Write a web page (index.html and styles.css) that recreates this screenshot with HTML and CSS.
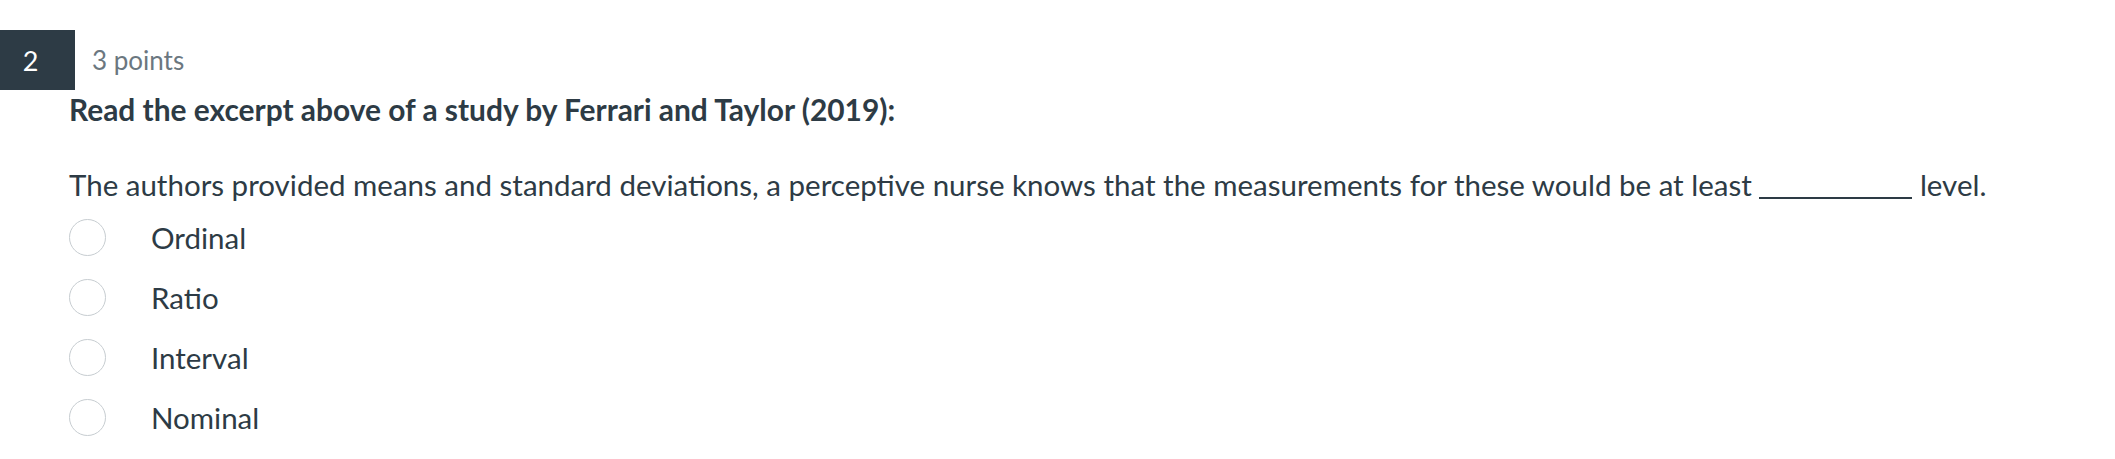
FILE: index.html
```html
<!DOCTYPE html>
<html lang="en">
<head>
<meta charset="utf-8">
<title>Question 2</title>
<link rel="stylesheet" href="styles.css">
</head>
<body>
<div class="question">
  <div class="question-header">
    <div class="question-number">2</div>
    <div class="question-points">3 points</div>
  </div>
  <div class="question-body">
    <p class="question-title">Read the excerpt above of a study by Ferrari and Taylor (2019):</p>
    <p class="question-text">The authors provided means and standard deviations, a perceptive nurse knows that the measurements for these would be at least <span class="blank"></span> level.</p>
    <ul class="answers">
      <li class="answer"><span class="radio"></span><span class="answer-label">Ordinal</span></li>
      <li class="answer"><span class="radio"></span><span class="answer-label">Ratio</span></li>
      <li class="answer"><span class="radio"></span><span class="answer-label">Interval</span></li>
      <li class="answer"><span class="radio"></span><span class="answer-label">Nominal</span></li>
    </ul>
  </div>
</div>
</body>
</html>
```
FILE: styles.css
```css
html, body {
  margin: 0;
  padding: 0;
  background: #ffffff;
}
body {
  font-family: Lato, "Liberation Sans", sans-serif;
  color: #2d3b45;
}
.question {
  padding-top: 30px;
}
.question-header {
  display: flex;
  align-items: center;
  height: 60px;
}
.question-number {
  width: 75px;
  height: 60px;
  background: #2d3b45;
  color: #ffffff;
  font-size: 27px;
  display: flex;
  align-items: center;
  justify-content: center;
  box-sizing: border-box;
  padding-right: 14px;
}
.question-points {
  margin-left: 17px;
  font-size: 26px;
  color: #6b7780;
}
.question-body {
  padding-left: 69px;
}
.question-title {
  margin: 2px 0 0;
  font-size: 29.9px;
  font-weight: 700;
  line-height: 34px;
}
.question-text {
  margin: 42px 0 0;
  font-size: 29.5px;
  line-height: 34px;
}
.blank {
  display: inline-block;
  width: 153px;
  height: 24px;
  border-bottom: 2px solid #2d3b45;
  vertical-align: baseline;
  margin-bottom: -3px;
}
.answers {
  list-style: none;
  margin: 5px 0 0;
  padding: 0;
}
.answer {
  display: flex;
  align-items: center;
  height: 60px;
}
.radio {
  width: 37px;
  height: 37px;
  box-sizing: border-box;
  border: 1px solid #c7cdd1;
  border-radius: 50%;
  flex: none;
}
.answer-label {
  margin-left: 45px;
  font-size: 29.5px;
}
```
